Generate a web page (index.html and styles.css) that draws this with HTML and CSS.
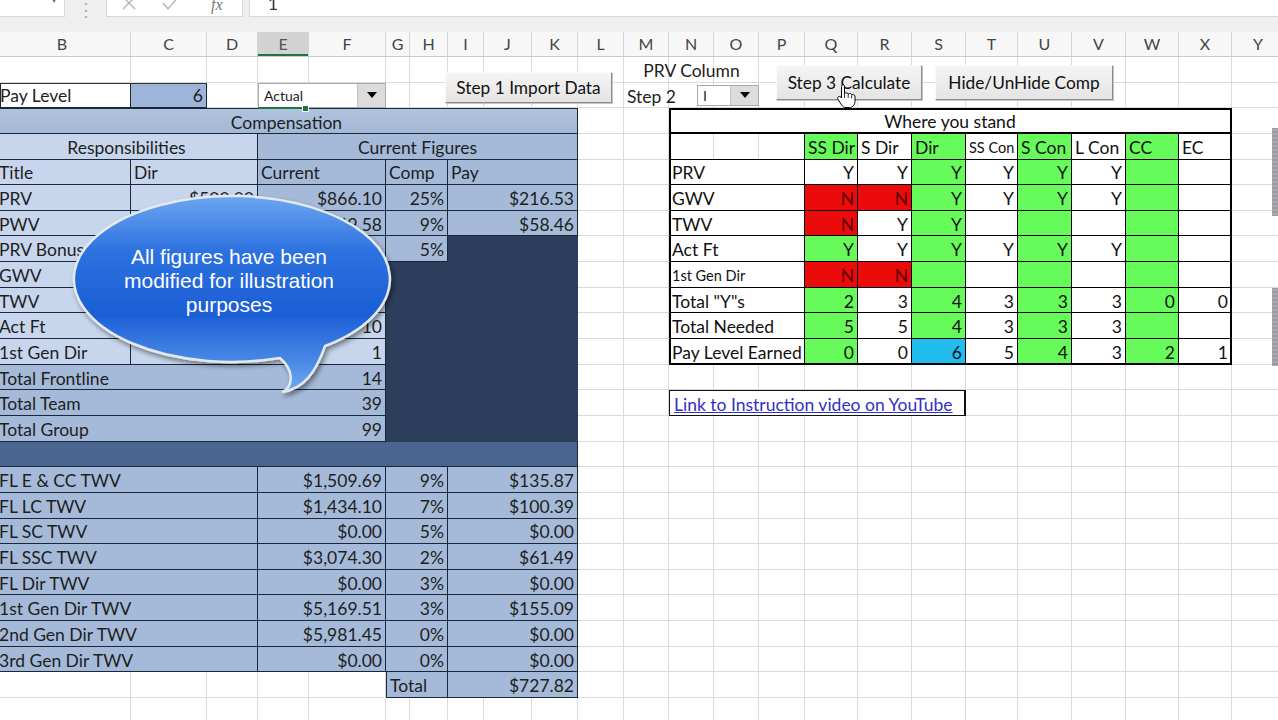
FILE: index.html
```html
<!DOCTYPE html>
<html lang="en">
<head>
  <meta charset="UTF-8">
  <title>Pay Level Calculator</title>
  <link rel="stylesheet" href="styles.css">
</head>
<body>

  <!-- Formula bar (scrolled, only its lower edge shows) -->
  <div class="formula-bar">
    <div class="name-box"><span class="name-caret">▾</span></div>
    <div class="fb-grip">⋮</div>
    <div class="fb-tools">
      <span class="fb-tool">
        <svg width="16" height="16" viewBox="0 0 16 16"><path d="M2 2l12 12M14 2L2 14" stroke="#b4b4b4" stroke-width="1.4" fill="none"/></svg>
      </span>
      <span class="fb-tool">
        <svg width="18" height="16" viewBox="0 0 18 16"><path d="M1 8l5 6L17 1" stroke="#b4b4b4" stroke-width="1.4" fill="none"/></svg>
      </span>
      <span class="fb-tool fb-fx">fx</span>
    </div>
    <div class="fb-input">1</div>
  </div>

  <!-- Column letters -->
  <div class="col-heads">
    <div>B</div><div>C</div><div>D</div><div class="selected">E</div><div>F</div><div>G</div>
    <div>H</div><div>I</div><div>J</div><div>K</div><div>L</div><div>M</div>
    <div>N</div><div>O</div><div>P</div><div>Q</div><div>R</div><div>S</div>
    <div>T</div><div>U</div><div>V</div><div>W</div><div>X</div><div>Y</div>
  </div>

  <div class="sheet">

    <!-- worksheet gridlines -->
    <div class="guides-v">
      <i></i><i></i><i></i><i></i><i></i><i></i><i></i><i></i><i></i><i></i><i></i><i></i>
      <i></i><i></i><i></i><i></i><i></i><i></i><i></i><i></i><i></i><i></i><i></i><i></i>
    </div>
    <div class="guides-h">
      <i></i><i></i><i></i><i></i><i></i><i></i><i></i><i></i><i></i><i></i><i></i><i></i><i></i>
      <i></i><i></i><i></i><i></i><i></i><i></i><i></i><i></i><i></i><i></i><i></i><i></i><i></i>
    </div>

    <!-- Row 1-2 inputs -->
    <div class="pay-label">Pay Level</div>
    <div class="pay-value">6</div>
    <div class="dropdown actual-select"><span>Actual</span><b class="dd-btn"></b></div>
    <div class="prv-col">PRV Column</div>
    <div class="step2">Step 2</div>
    <div class="dropdown step2-select"><span>I</span><b class="dd-btn"></b></div>

    <!-- Compensation table -->
    <div class="comp">
      <div class="row">
        <div class="c hd ctr s10">Compensation</div>
      </div>
      <div class="row">
        <div class="c lt ctr s3">Responsibilities</div>
        <div class="c md ctr s7">Current Figures</div>
      </div>
      <div class="row">
        <div class="c lt">Title</div>
        <div class="c lt s2">Dir</div>
        <div class="c md s2">Current</div>
        <div class="c md s2">Comp</div>
        <div class="c md s3">Pay</div>
      </div>
      <div class="row">
        <div class="c lt">PRV</div>
        <div class="c lt r s2">$500.00</div>
        <div class="c md r s2">$866.10</div>
        <div class="c md r s2">25%</div>
        <div class="c md r s3">$216.53</div>
      </div>
      <div class="row">
        <div class="c lt">PWV</div>
        <div class="c lt r s2"></div>
        <div class="c md r s2">$649.58</div>
        <div class="c md r s2">9%</div>
        <div class="c md r s3">$58.46</div>
      </div>
      <div class="row">
        <div class="c lt">PRV Bonus</div>
        <div class="c lt r s2"></div>
        <div class="c md r s2"></div>
        <div class="c md r s2">5%</div>
        <div class="c dk s3"></div>
      </div>
      <div class="row">
        <div class="c lt">GWV</div>
        <div class="c lt r s4"></div>
        <div class="c dk s5"></div>
      </div>
      <div class="row">
        <div class="c lt">TWV</div>
        <div class="c lt r s4"></div>
        <div class="c dk s5"></div>
      </div>
      <div class="row">
        <div class="c lt">Act Ft</div>
        <div class="c lt r s4">10</div>
        <div class="c dk s5"></div>
      </div>
      <div class="row">
        <div class="c lt">1st Gen Dir</div>
        <div class="c lt r s4">1</div>
        <div class="c dk s5"></div>
      </div>
      <div class="row">
        <div class="c md split s5"><span>Total Frontline</span><span>14</span></div>
        <div class="c dk s5"></div>
      </div>
      <div class="row">
        <div class="c md split s5"><span>Total Team</span><span>39</span></div>
        <div class="c dk s5"></div>
      </div>
      <div class="row">
        <div class="c md split s5"><span>Total Group</span><span>99</span></div>
        <div class="c dk s5"></div>
      </div>
      <div class="row">
        <div class="c band s10"></div>
      </div>
      <div class="row">
        <div class="c md s3">FL E &amp; CC TWV</div>
        <div class="c md r s2">$1,509.69</div>
        <div class="c md r s2">9%</div>
        <div class="c md r s3">$135.87</div>
      </div>
      <div class="row">
        <div class="c md s3">FL LC TWV</div>
        <div class="c md r s2">$1,434.10</div>
        <div class="c md r s2">7%</div>
        <div class="c md r s3">$100.39</div>
      </div>
      <div class="row">
        <div class="c md s3">FL SC TWV</div>
        <div class="c md r s2">$0.00</div>
        <div class="c md r s2">5%</div>
        <div class="c md r s3">$0.00</div>
      </div>
      <div class="row">
        <div class="c md s3">FL SSC TWV</div>
        <div class="c md r s2">$3,074.30</div>
        <div class="c md r s2">2%</div>
        <div class="c md r s3">$61.49</div>
      </div>
      <div class="row">
        <div class="c md s3">FL Dir TWV</div>
        <div class="c md r s2">$0.00</div>
        <div class="c md r s2">3%</div>
        <div class="c md r s3">$0.00</div>
      </div>
      <div class="row">
        <div class="c md s3">1st Gen Dir TWV</div>
        <div class="c md r s2">$5,169.51</div>
        <div class="c md r s2">3%</div>
        <div class="c md r s3">$155.09</div>
      </div>
      <div class="row">
        <div class="c md s3">2nd Gen Dir TWV</div>
        <div class="c md r s2">$5,981.45</div>
        <div class="c md r s2">0%</div>
        <div class="c md r s3">$0.00</div>
      </div>
      <div class="row">
        <div class="c md s3">3rd Gen Dir TWV</div>
        <div class="c md r s2">$0.00</div>
        <div class="c md r s2">0%</div>
        <div class="c md r s3">$0.00</div>
      </div>
      <div class="row">
        <div class="c blank s5"></div>
        <div class="c md total s2">Total</div>
        <div class="c md r s3">$727.82</div>
      </div>
    </div>

    <!-- Where you stand -->
    <div class="stand">
      <div class="row">
        <div class="c title">Where you stand</div>
      </div>
      <div class="row">
        <div class="c blank"></div>
        <div class="c g">SS Dir</div>
        <div class="c">S Dir</div>
        <div class="c g">Dir</div>
        <div class="c small">SS Con</div>
        <div class="c g">S Con</div>
        <div class="c">L Con</div>
        <div class="c g">CC</div>
        <div class="c">EC</div>
      </div>
      <div class="row">
        <div class="c">PRV</div>
        <div class="c r">Y</div>
        <div class="c r">Y</div>
        <div class="c r g">Y</div>
        <div class="c r">Y</div>
        <div class="c r g">Y</div>
        <div class="c r">Y</div>
        <div class="c g"></div>
        <div class="c"></div>
      </div>
      <div class="row">
        <div class="c">GWV</div>
        <div class="c r rd">N</div>
        <div class="c r rd">N</div>
        <div class="c r g">Y</div>
        <div class="c r">Y</div>
        <div class="c r g">Y</div>
        <div class="c r">Y</div>
        <div class="c g"></div>
        <div class="c"></div>
      </div>
      <div class="row">
        <div class="c">TWV</div>
        <div class="c r rd">N</div>
        <div class="c r">Y</div>
        <div class="c r g">Y</div>
        <div class="c"></div>
        <div class="c g"></div>
        <div class="c"></div>
        <div class="c g"></div>
        <div class="c"></div>
      </div>
      <div class="row">
        <div class="c">Act Ft</div>
        <div class="c r g">Y</div>
        <div class="c r">Y</div>
        <div class="c r g">Y</div>
        <div class="c r">Y</div>
        <div class="c r g">Y</div>
        <div class="c r">Y</div>
        <div class="c g"></div>
        <div class="c"></div>
      </div>
      <div class="row">
        <div class="c small">1st Gen Dir</div>
        <div class="c r rd">N</div>
        <div class="c r rd">N</div>
        <div class="c g"></div>
        <div class="c"></div>
        <div class="c g"></div>
        <div class="c"></div>
        <div class="c g"></div>
        <div class="c"></div>
      </div>
      <div class="row">
        <div class="c">Total "Y"s</div>
        <div class="c r g">2</div>
        <div class="c r">3</div>
        <div class="c r g">4</div>
        <div class="c r">3</div>
        <div class="c r g">3</div>
        <div class="c r">3</div>
        <div class="c r g">0</div>
        <div class="c r">0</div>
      </div>
      <div class="row">
        <div class="c">Total Needed</div>
        <div class="c r g">5</div>
        <div class="c r">5</div>
        <div class="c r g">4</div>
        <div class="c r">3</div>
        <div class="c r g">3</div>
        <div class="c r">3</div>
        <div class="c g"></div>
        <div class="c"></div>
      </div>
      <div class="row">
        <div class="c">Pay Level Earned</div>
        <div class="c r g">0</div>
        <div class="c r">0</div>
        <div class="c r bl">6</div>
        <div class="c r">5</div>
        <div class="c r g">4</div>
        <div class="c r">3</div>
        <div class="c r g">2</div>
        <div class="c r">1</div>
      </div>
    </div>

    <div class="video-link"><a href="#">Link to Instruction video on YouTube</a></div>

    <!-- floating controls over the sheet -->
    <div class="sel-mark"></div>
    <button class="xl-btn btn-import">Step 1 Import Data</button>
    <button class="xl-btn btn-calc">Step 3 Calculate</button>
    <button class="xl-btn btn-hide">Hide/UnHide Comp</button>

    <svg class="callout" width="340" height="215" viewBox="60 185 340 215">
      <defs>
        <linearGradient id="bubbleFill" x1="0" y1="0" x2="0" y2="1">
          <stop offset="0" stop-color="#6ca6f1"/>
          <stop offset="0.28" stop-color="#2d72e0"/>
          <stop offset="0.6" stop-color="#1b5ed6"/>
          <stop offset="0.85" stop-color="#4a8ae6"/>
          <stop offset="1" stop-color="#74acf1"/>
        </linearGradient>
        <filter id="bubbleShadow" x="-10%" y="-10%" width="130%" height="130%">
          <feDropShadow dx="2" dy="3" stdDeviation="2.5" flood-color="#000" flood-opacity="0.45"/>
        </filter>
      </defs>
      <path d="M 280 358 A 158 83 0 1 1 325 346 C 316 372, 304 389, 282 392 C 292 388, 296 372, 280 358 Z"
            fill="url(#bubbleFill)" stroke="#e3e8ef" stroke-width="2.5" filter="url(#bubbleShadow)"/>
    </svg>
    <div class="callout-text">All figures have been<br>modified for illustration<br>purposes</div>

    <svg class="hand" width="20" height="26" viewBox="0 0 20 26">
      <path d="M6.5 1.5c1.1 0 2 .8 2 2v7.2c.4-.6 1.1-.9 1.8-.9 1 0 1.7.6 1.9 1.4.4-.4 1-.7 1.6-.7 1 0 1.8.7 1.9 1.6.4-.3.9-.5 1.4-.5 1.1 0 1.9.9 1.9 2v4.6c0 3.6-2.4 6.3-5.6 6.3H10c-2 0-3.3-1-4.4-2.6L2 16.3c-.6-.9-.4-2 .5-2.5.8-.5 1.8-.3 2.4.4l.6.8V3.5c0-1.2.9-2 2-2z"
            fill="#fff" stroke="#000" stroke-width="1"/>
      <path d="M8.5 10.7v4.3M12.2 11.3v3.7M15.6 12.5v3" stroke="#000" stroke-width="0.8"/>
    </svg>

    <div class="edge-art top"></div>
    <div class="edge-art bottom"></div>
  </div>

</body>
</html>
```

FILE: styles.css
```css
/* Page */
body {
  --cols: 131px 76px 51px 51px 77px 24px 38px 36px 48px 46px 46px 45px 45px 45px 46px 53px 54px 54px 52px 54px 54px 53px 53px 53px;
  --row: 25.65px;
  --line: #1b2639;
  margin: 0;
  width: 1278px;
  height: 720px;
  overflow: hidden;
  background: #fff;
  font-family: Lato, "Liberation Sans", sans-serif;
  font-size: 17.5px;
  color: #1e1e1e;
}

/* Formula bar */
.formula-bar {
  height: 32px;
  display: flex;
  align-items: flex-end;
  background: #efefef;
}
.name-box,
.fb-tools,
.fb-input {
  height: 28px;
  margin-bottom: 15px;
  background: #fff;
  box-sizing: border-box;
  border-bottom: 1px solid #d8d8d8;
}
.name-box {
  width: 65px;
  position: relative;
  border-right: 1px solid #d8d8d8;
}
.name-caret {
  position: absolute;
  right: 7px;
  bottom: 10px;
  font-size: 12px;
  color: #666;
}
.fb-grip {
  width: 41px;
  margin-bottom: 13px;
  text-align: center;
  color: #a9a9a9;
  font-size: 18px;
  line-height: 20px;
}
.fb-tools {
  width: 137px;
  display: flex;
  border-left: 1px solid #d8d8d8;
  border-right: 1px solid #d8d8d8;
}
.fb-tool {
  display: flex;
  align-items: center;
  justify-content: center;
  width: 44px;
}
.fb-tool + .fb-tool { width: 42px; }
.fb-fx {
  width: 51px !important;
  font-family: "Liberation Serif", serif;
  font-style: italic;
  font-size: 16px;
  color: #777;
  padding-top: 4px;
  box-sizing: border-box;
}
.fb-input {
  flex: 1;
  margin-left: 6px;
  padding-left: 18px;
  line-height: 30px;
  font-size: 17px;
  color: #333;
  border-left: 1px solid #d8d8d8;
}

/* Column letters */
.col-heads {
  display: grid;
  grid-template-columns: var(--cols);
  height: 25px;
  box-sizing: border-box;
  background: #f7f7f7;
  border-bottom: 1px solid #cbcbcb;
}
.col-heads div {
  border-right: 1px solid #d6d6d6;
  text-align: center;
  line-height: 24px;
  color: #444;
  font-size: 16px;
}
.col-heads div:first-child { padding-right: 6px; }
.col-heads .selected {
  background: #d3d3d3;
  box-shadow: inset 0 -2px 0 #217346;
  color: #555;
}

/* Worksheet grid */
.sheet {
  position: relative;
  display: grid;
  grid-template-columns: var(--cols);
  grid-template-rows: repeat(26, var(--row));
}
.guides-v {
  grid-column: 1 / -1;
  grid-row: 1 / -1;
  display: grid;
  grid-template-columns: var(--cols);
}
.guides-v i { border-right: 1px solid #dadada; }
.guides-h {
  grid-column: 1 / -1;
  grid-row: 1 / -1;
  display: grid;
  grid-template-rows: repeat(26, var(--row));
}
.guides-h i { border-bottom: 1px solid #dadada; }

/* Pay level + drop downs */
.pay-label,
.pay-value {
  grid-row: 2;
  display: flex;
  align-items: center;
  padding-top: 1px;
  border: 1px solid var(--line);
  border-top-color: #333;
}
.pay-label {
  grid-column: 1;
  background: #fff;
  text-indent: -1px;
}
.pay-value {
  grid-column: 2;
  border-left: none;
  justify-content: flex-end;
  padding-right: 3px;
  background: #9db5d9;
}
.dropdown {
  grid-row: 2;
  display: flex;
  align-items: center;
  background: #fff;
  border: 1px solid #a9a9a9;
  box-sizing: border-box;
  font-size: 14px;
}
.dropdown span { flex: 1; padding-left: 5px; }
.dd-btn {
  width: 27px;
  height: 100%;
  display: flex;
  align-items: center;
  justify-content: center;
  background: #dcdcdc;
  border-left: 1px solid #c4c4c4;
}
.dd-btn::after {
  content: "";
  border-left: 5px solid transparent;
  border-right: 5px solid transparent;
  border-top: 6px solid #000;
}
.actual-select {
  grid-column: 4 / 6;
  height: 25px;
}
.step2-select {
  grid-column: 13 / 15;
  justify-self: end;
  align-self: center;
  width: 62px;
  height: 21px;
}
.prv-col {
  grid-column: 12 / 15;
  grid-row: 1;
  display: flex;
  align-items: center;
  justify-content: center;
  padding-top: 1px;
}
.step2 {
  grid-column: 12;
  grid-row: 2;
  display: flex;
  align-items: center;
  padding: 2px 0 0 3px;
  white-space: nowrap;
}

/* Shared table cells */
.row { display: contents; }
.c {
  display: flex;
  align-items: center;
  box-sizing: border-box;
  padding: 2px 3px 0;
  white-space: nowrap;
  overflow: hidden;
}
.r { justify-content: flex-end; }
.ctr { justify-content: center; }
.s2 { grid-column: span 2; }
.s3 { grid-column: span 3; }
.s4 { grid-column: span 4; }
.s5 { grid-column: span 5; }
.s7 { grid-column: span 7; }
.s10 { grid-column: span 10; }

/* Compensation table */
.comp {
  grid-column: 1 / 11;
  grid-row: 3 / 26;
  display: grid;
  grid-template-columns: 131px 76px 51px 51px 77px 24px 38px 36px 48px 46px;
  grid-auto-rows: var(--row);
}
.comp .c {
  border-right: 1px solid var(--line);
  border-bottom: 1px solid var(--line);
}
.comp .row > .c:first-child { padding-left: 0; text-indent: -1px; }
.comp .row:first-child .c { border-top: 1px solid var(--line); }
.comp .hd { background: linear-gradient(#afc3de, #a3b8d6); }
.comp .lt { background: #c7d6ec; }
.comp .md { background: #a5bad8; }
.comp .dk { background: #2c3e5b; border-color: #2c3e5b; }
.comp .band { background: #4a6690; }
.comp .split { justify-content: space-between; }
.comp .blank { background: none; border: none; }
.comp .total { border-left: 1px solid var(--line); }

/* Where you stand */
.stand {
  grid-column: 13 / 24;
  grid-row: 3 / 13;
  position: relative;
  display: grid;
  grid-template-columns: 136px 53px 54px 54px 52px 54px 54px 53px 53px;
  grid-auto-rows: var(--row);
}
.stand::after {
  content: "";
  position: absolute;
  inset: 0;
  border: 2px solid #000;
  pointer-events: none;
}
.stand .c {
  background: #fff;
  border-right: 1px solid #000;
  border-bottom: 1px solid #000;
  color: #111;
}
.stand .title {
  grid-column: span 9;
  justify-content: center;
  border-bottom: 2px solid #000;
}
.stand .blank { background: transparent; }
.stand .small { font-size: 14.5px; }
.stand .g { background: #66fb5a; }
.stand .rd { background: #ec0b0b; color: #5c0000; }
.stand .bl { background: #21bdee; }

/* YouTube link */
.video-link {
  grid-column: 13 / 19;
  grid-row: 14;
  display: flex;
  align-items: center;
  padding: 2px 0 0 4px;
  background: #fff;
  border: 1px solid #111;
  border-right-width: 2px;
}
.video-link a {
  color: #3030c8;
  text-decoration: underline;
  white-space: nowrap;
}

/* Selected cell marker under "Actual" */
.sel-mark {
  position: absolute;
  left: 258px;
  top: 50px;
  width: 48px;
  height: 2px;
  background: #217346;
}
.sel-mark::after {
  content: "";
  position: absolute;
  right: -3px;
  top: -2px;
  width: 5px;
  height: 5px;
  background: #217346;
  border: 1px solid #fff;
}

/* Macro buttons */
.xl-btn {
  position: absolute;
  box-sizing: border-box;
  padding: 0;
  font-family: Lato, "Liberation Sans", sans-serif;
  font-size: 17.3px;
  color: #111;
  background: linear-gradient(#f5f5f5, #e4e4e4);
  border: 1px solid;
  border-color: #fafafa #8c8c8c #8c8c8c #fafafa;
  box-shadow: 1px 1px 0 #c4c4c4;
}
.btn-import { left: 445px; top: 15px; width: 167px; height: 31px; }
.btn-calc { left: 776px; top: 8px; width: 146px; height: 35px; }
.btn-hide { left: 935px; top: 8px; width: 178px; height: 35px; }

/* Callout */
.callout {
  position: absolute;
  left: 60px;
  top: 128px;
}
.callout-text {
  position: absolute;
  left: 70px;
  top: 188px;
  width: 318px;
  text-align: center;
  font-family: "Liberation Sans", Arial, sans-serif;
  font-size: 21px;
  line-height: 24px;
  color: #fff;
}

.hand {
  position: absolute;
  left: 836px;
  top: 26px;
}

/* clipped picture at the right window edge */
.edge-art {
  position: absolute;
  left: 1272px;
  width: 6px;
  background: repeating-linear-gradient(#b48ac0 0 1px, #8fb9a0 1px 2px, #c9a46f 2px 3px, #7f9fd0 3px 4px);
}
.edge-art.top { top: 71px; height: 88px; }
.edge-art.bottom { top: 231px; height: 78px; }
```
